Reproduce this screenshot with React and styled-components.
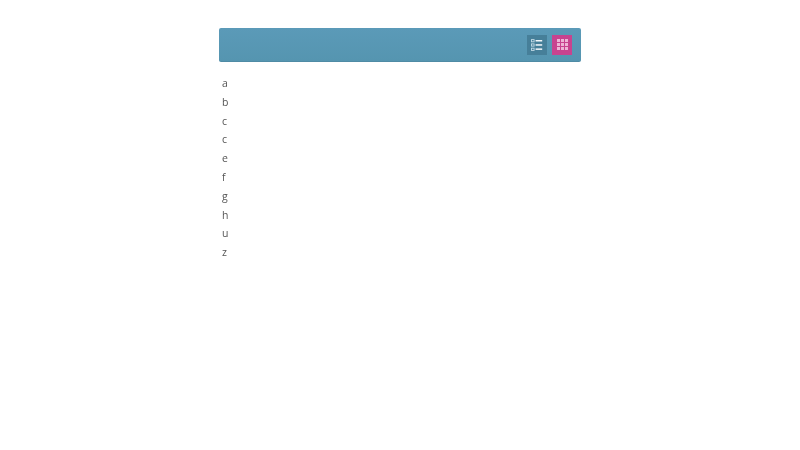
import React from "react";
import styled, { createGlobalStyle } from "styled-components";

const GlobalStyle = createGlobalStyle`
  html, body {
    margin: 0;
    padding: 0;
    background: #fff;
  }
`;

const Page = styled.div`
  width: 362px;
  margin: 0 auto;
  padding-top: 28px;
  font-family: "Open Sans", sans-serif;
`;

const Toolbar = styled.div`
  height: 34px;
  box-sizing: border-box;
  display: flex;
  align-items: center;
  justify-content: flex-end;
  gap: 5px;
  padding-right: 9px;
  border-radius: 2px;
  background: linear-gradient(#5b9ab8, #5595b0);
  border-bottom: 1px solid #4f8ba5;
`;

const ViewButton = styled.button`
  width: 20px;
  height: 20px;
  padding: 0;
  border: 0;
  display: flex;
  align-items: center;
  justify-content: center;
  background: ${props => (props.$active ? "#c8438f" : "#467f99")};
`;

const List = styled.ul`
  list-style: none;
  margin: 11.8px 0 0;
  padding: 0 0 0 3px;
  will-change: transform;
`;

const Item = styled.li`
  height: 18.8px;
  line-height: 18.8px;
  font-size: 10.5px;
  color: #555;
`;

const items = ["a", "b", "c", "c", "e", "f", "g", "h", "u", "z"];

const ListIcon = () => (
  <svg width="12" height="12" viewBox="0 0 12 12" fill="none">
    <rect x="0.5" y="0.6" width="2.6" height="2.2" stroke="#c3dbe6" strokeWidth="0.9" />
    <rect x="0.5" y="4.9" width="2.6" height="2.2" stroke="#c3dbe6" strokeWidth="0.9" />
    <rect x="0.5" y="9.2" width="2.6" height="2.2" stroke="#c3dbe6" strokeWidth="0.9" />
    <rect x="4.6" y="1" width="6.6" height="1.5" fill="#f2f7fa" />
    <rect x="4.6" y="5.2" width="6.6" height="1.5" fill="#f2f7fa" />
    <rect x="4.6" y="9.4" width="6.6" height="1.5" fill="#f2f7fa" />
  </svg>
);

const GridIcon = () => (
  <svg width="11" height="11" viewBox="0 0 11 11" fill="#eeb4d6">
    {[0, 4, 8].map(y =>
      [0, 4, 8].map(x => <rect key={`${x}-${y}`} x={x} y={y} width="3" height="3" />)
    )}
  </svg>
);

export default function App() {
  return (
    <Page>
      <GlobalStyle />
      <Toolbar>
        <ViewButton aria-label="List view">
          <ListIcon />
        </ViewButton>
        <ViewButton $active aria-label="Grid view">
          <GridIcon />
        </ViewButton>
      </Toolbar>
      <List>
        {items.map((item, i) => (
          <Item key={i}>{item}</Item>
        ))}
      </List>
    </Page>
  );
}
